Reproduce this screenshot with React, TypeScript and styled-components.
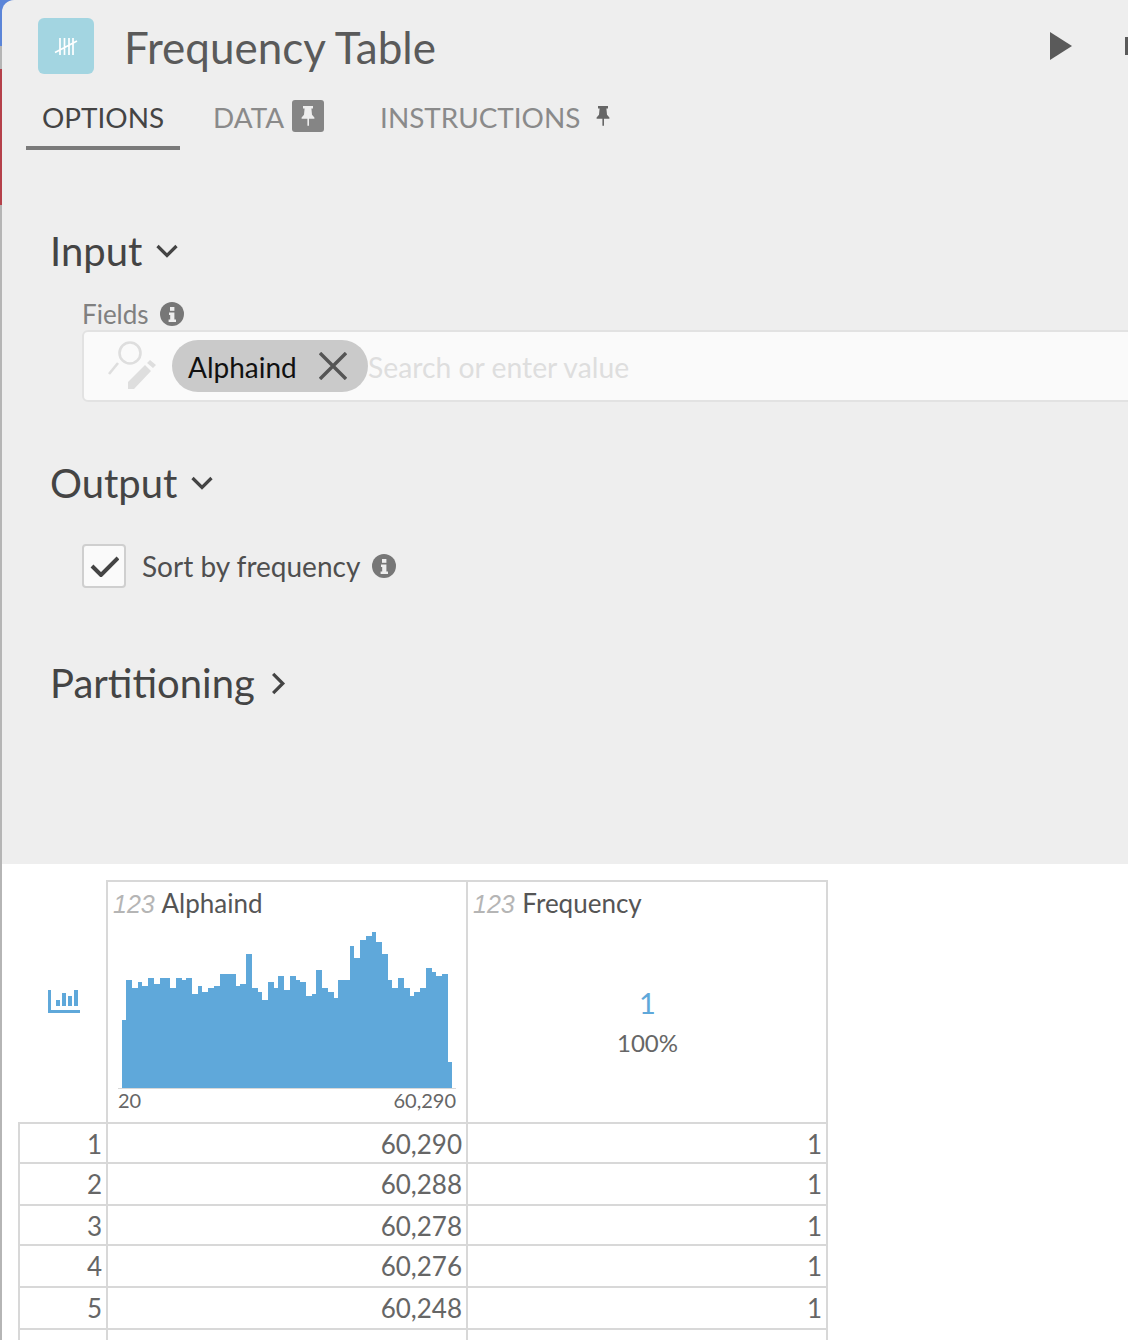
import React from 'react'
import styled, { createGlobalStyle } from 'styled-components'

const HISTOGRAM: [number, number][] = [
  [78, 300], [96, 180], [114, 204], [126, 186], [144, 198], [162, 174], [180, 192], [210, 174],
  [228, 204], [246, 174], [258, 180], [276, 174], [294, 222], [306, 198], [324, 216], [342, 204],
  [360, 198], [408, 162], [420, 198], [438, 192], [456, 102], [474, 204], [486, 216], [504, 240],
  [522, 186], [534, 204], [552, 168], [570, 210], [588, 168], [600, 180], [618, 186], [636, 228],
  [648, 222], [666, 150], [684, 204], [702, 216], [714, 234], [750, 180], [762, 78], [780, 114],
  [798, 60], [816, 48], [828, 36], [846, 66], [864, 102], [876, 180], [894, 204], [912, 174],
  [930, 204], [942, 228], [960, 216], [978, 204], [996, 144], [1008, 156], [1026, 168], [1044, 162],
  [1056, 426],
]

function histogramPath() {
  let d = 'M66 504'
  let x = 66
  HISTOGRAM.forEach(([end, top]) => {
    d += `L${x} ${top}L${end} ${top}`
    x = end
  })
  return `${d}L${x} 504Z`
}

const rows = [
  [1, '60,290', 1],
  [2, '60,288', 1],
  [3, '60,278', 1],
  [4, '60,276', 1],
  [5, '60,248', 1],
]

function InfoIcon() {
  return (
    <InfoSvg viewBox="0 0 24 24">
      <circle cx="12" cy="12" r="12" fill="#777" />
      <rect x="10" y="5" width="4.4" height="3.8" fill="#eee" />
      <path d="M9 10.5h5.4v7H16V20H8.6v-2.5h1.6v-4.5H9z" fill="#eee" />
    </InfoSvg>
  )
}

function PinIcon({ color }: { color: string }) {
  return (
    <svg width="14" height="20" viewBox="0 0 14 20">
      <path d="M2 0h10v2.4h-1.6l.6 6.4 2.4 2.6v1.4H8v7H6.4v-7H.6v-1.4L3 8.8l.6-6.4H2z" fill={color} />
    </svg>
  )
}

function App() {
  return (
    <>
      <GlobalStyle />
      <Page>
        <Panel>
          <TitleBar>
            <AppIcon>
              <svg width="24" height="19" viewBox="0 0 24 19">
                <path d="M6 1v17M10.5 1v17M15 1v17M19 1v17M1 15.5L23 4" stroke="#fff" strokeWidth="1.7" fill="none" />
              </svg>
            </AppIcon>
            <Title>Frequency Table</Title>
            <RunButton viewBox="0 0 22 28">
              <path d="M0 0L22 14L0 28Z" fill="#5a5a5a" />
            </RunButton>
            <CutOff />
          </TitleBar>
          <Tabs>
            <Tab $active>OPTIONS</Tab>
            <Tab>
              DATA
              <PinBox>
                <PinIcon color="#eee" />
              </PinBox>
            </Tab>
            <Tab>
              INSTRUCTIONS
              <LoosePin>
                <PinIcon color="#666" />
              </LoosePin>
            </Tab>
          </Tabs>
          <Section>
            <SectionTitle>
              Input
              <Chevron viewBox="0 0 22 14">
                <path d="M1.5 2l9.5 9.5L20.500 2" />
              </Chevron>
            </SectionTitle>
            <FieldLabel>
              Fields <InfoIcon />
            </FieldLabel>
            <SearchBox>
              <SearchIcon viewBox="0 0 50 50">
                <circle cx="22" cy="12" r="10.5" fill="none" stroke="#dedede" strokeWidth="2.6" />
                <path d="M10 22L1 33" stroke="#dedede" strokeWidth="2.6" fill="none" />
                <path d="M20 48v-7L37 24l6 6-17 18zM39 22l3-3 6 5-3 3z" fill="#dedede" />
              </SearchIcon>
              <Chip>
                Alphaind
                <svg width="28" height="28" viewBox="0 0 28 28">
                  <path d="M1 1l26 26M27 1L1 27" stroke="#555" strokeWidth="3.4" />
                </svg>
              </Chip>
              <Placeholder>Search or enter value</Placeholder>
            </SearchBox>
          </Section>
          <OutputSection>
            <SectionTitle>
              Output
              <Chevron viewBox="0 0 22 14">
                <path d="M1.5 2l9.5 9.5L20.500 2" />
              </Chevron>
            </SectionTitle>
            <CheckRow>
              <CheckBox>
                <svg width="30" height="22" viewBox="0 0 30 22">
                  <path d="M3 11l9 9L29 3" stroke="#444" strokeWidth="4" fill="none" />
                </svg>
              </CheckBox>
              Sort by frequency
              <InfoIcon />
            </CheckRow>
          </OutputSection>
          <PartitionTitle>
            Partitioning
            <ChevronRight viewBox="0 0 14 22">
              <path d="M2 2l9 9-9 9" />
            </ChevronRight>
          </PartitionTitle>
        </Panel>
        <TableArea>
          <Grid>
            <ChartCorner>
              <svg width="32" height="23" viewBox="0 0 32 23">
                <path d="M1.5 0v21.5H32" stroke="#5fa8da" strokeWidth="3" fill="none" />
                <path d="M8 10h4v6H8zM14 3h4v13h-4zM20 6h4v10h-4zM26 0h4v16h-4z" fill="#5fa8da" />
              </svg>
            </ChartCorner>
            <HeadCell>
              <HeadName>
                <TypeTag>123</TypeTag> Alphaind
              </HeadName>
              <HistogramSvg viewBox="54 0 1014 510">
                <path d={histogramPath()} fill="#5fa8da" />
                <path d="M54 505.5H1068" stroke="#d8d8d8" strokeWidth="3" />
              </HistogramSvg>
              <AxisRow>
                <span>20</span>
                <span>60,290</span>
              </AxisRow>
            </HeadCell>
            <HeadCell>
              <HeadName>
                <TypeTag>123</TypeTag> Frequency
              </HeadName>
              <Summary>
                <SummaryValue>1</SummaryValue>
                <SummaryPct>100%</SummaryPct>
              </Summary>
            </HeadCell>
            {rows.map(([index, value, freq]) => (
              <React.Fragment key={index}>
                <Cell>{index}</Cell>
                <Cell>{value}</Cell>
                <Cell>{freq}</Cell>
              </React.Fragment>
            ))}
            <Cell />
            <Cell />
            <Cell />
          </Grid>
        </TableArea>
      </Page>
    </>
  )
}

export default App

const GlobalStyle = createGlobalStyle`
  html, body {
    margin: 0;
    padding: 0;
    background: #fff;
  }
  body {
    font-family: Lato, "Open Sans", sans-serif;
    overflow: hidden;
  }
`

const Page = styled.div`
  width: 1128px;
  height: 1340px;
  overflow: hidden;
  background: linear-gradient(
    #5b85d8 0 46px,
    #b5b5b5 46px 69px,
    #b5414a 69px 205px,
    #b5b5b5 205px
  );
`

const Panel = styled.div`
  margin-left: 2px;
  height: 864px;
  box-sizing: border-box;
  background: #eeeeee;
  border-top-left-radius: 12px;
  padding-top: 18px;
  overflow: hidden;
`

const TitleBar = styled.div`
  display: flex;
  align-items: center;
  height: 56px;
  padding-left: 36px;
`

const AppIcon = styled.div`
  width: 56px;
  height: 56px;
  border-radius: 6px;
  background: #a3d5e1;
  display: flex;
  align-items: center;
  justify-content: center;
`

const Title = styled.h1`
  margin: 2px 0 0 30px;
  font-size: 44px;
  font-weight: 400;
  color: #5a5a5a;
  flex: 1;
`

const RunButton = styled.svg`
  width: 22px;
  height: 28px;
  margin-right: 53px;
`

const CutOff = styled.div`
  width: 3px;
  height: 18px;
  background: #5a5a5a;
`

const Tabs = styled.div`
  display: flex;
  margin: 18px 0 0 24px;
  height: 58px;
`

const Tab = styled.div<{ $active?: boolean }>`
  display: flex;
  align-items: flex-start;
  gap: 8px;
  padding: 8px 16px 0;
  margin-right: ${({ $active }) => ($active ? '17px' : '24px')};
  font-size: 27.9px;
  line-height: 35px;
  color: ${({ $active }) => ($active ? '#444' : '#8a8a8a')};
  border-bottom: ${({ $active }) => ($active ? '4px solid #7a7a7a' : '4px solid transparent')};
  box-sizing: border-box;
`

const PinBox = styled.span`
  width: 32px;
  height: 32px;
  border-radius: 3px;
  background: #858585;
  display: flex;
  align-items: center;
  justify-content: center;
`

const LoosePin = styled.span`
  display: flex;
  margin: 6px 0 0 8px;
`

const Section = styled.section`
  margin: 78px 0 0 48px;
`

const OutputSection = styled.section`
  margin: 58px 0 0 48px;
`

const SectionTitle = styled.h2`
  display: flex;
  align-items: center;
  gap: 14px;
  margin: 0;
  height: 46px;
  font-size: 40px;
  font-weight: 400;
  color: #444;
`

const PartitionTitle = styled(SectionTitle)`
  margin: 72px 0 0 48px;
  gap: 16px;
`

const Chevron = styled.svg`
  width: 22px;
  height: 14px;
  fill: none;
  stroke: #444;
  stroke-width: 3.2;
`

const ChevronRight = styled.svg`
  width: 15px;
  height: 25px;
  fill: none;
  stroke: #444;
  stroke-width: 3;
`

const FieldLabel = styled.div`
  display: flex;
  align-items: center;
  gap: 11px;
  margin: 25px 0 0 32px;
  height: 30px;
  font-size: 26px;
  color: #808080;
`

const InfoSvg = styled.svg`
  width: 24px;
  height: 24px;
  flex: none;
`

const SearchBox = styled.div`
  display: flex;
  align-items: center;
  margin: 1px -20px 0 32px;
  height: 72px;
  box-sizing: border-box;
  background: #fafafa;
  border: 2px solid #e2e2e2;
  border-radius: 6px;
  padding-left: 24px;
`

const SearchIcon = styled.svg`
  width: 50px;
  height: 50px;
  flex: none;
`

const Chip = styled.div`
  display: flex;
  align-items: center;
  justify-content: space-between;
  width: 196px;
  height: 52px;
  box-sizing: border-box;
  padding: 2px 21px 0 16px;
  margin-left: 14px;
  border-radius: 26px;
  background: #cacaca;
  color: #111;
  font-size: 28px;
  flex: none;

  svg {
    margin-top: -2px;
  }
`

const Placeholder = styled.span`
  padding-top: 2px;
  font-size: 28.3px;
  color: #dedede;
`

const CheckRow = styled.div`
  display: flex;
  align-items: center;
  margin: 38px 0 0 32px;
  height: 44px;
  font-size: 28px;
  color: #4f4f4f;

  > svg {
    margin-left: 12px;
    margin-top: -1px;
  }
`

const CheckBox = styled.div`
  width: 44px;
  height: 44px;
  box-sizing: border-box;
  background: #fafafa;
  border: 2px solid #cfcfcf;
  border-radius: 4px;
  display: flex;
  align-items: center;
  justify-content: center;
  margin-right: 16px;
`

const TableArea = styled.div`
  height: 476px;
  background: #fff;
  border-left: 2px solid #b5b5b5;
  padding: 16px 0 0 16px;
  overflow: hidden;
`

const Grid = styled.div`
  display: grid;
  grid-template-columns: 88px 360px 362px;
  grid-template-rows: 242px 40px 42px 40px 42px 42px 40px;
`

const ChartCorner = styled.div`
  display: flex;
  justify-content: flex-end;
  padding: 110px 26px 0 0;
`

const HeadCell = styled.div`
  position: relative;
  border: 2px solid #d8d8d8;
  border-right-width: 0;
  border-bottom-width: 0;
  box-sizing: border-box;
  padding: 4px 4px 0 5px;

  &:nth-child(3) {
    border-right-width: 2px;
  }
`

const HeadName = styled.div`
  font-size: 26px;
  line-height: 35px;
  color: #555;
`

const TypeTag = styled.span`
  font-family: 'Liberation Sans', sans-serif;
  font-style: italic;
  font-size: 25px;
  color: #b5b5b5;
  margin-right: 1px;
`

const HistogramSvg = styled.svg`
  display: block;
  width: 338px;
  height: 170px;
  margin: -2px 0 0 5px;
`

const AxisRow = styled.div`
  display: flex;
  justify-content: space-between;
  margin: -2px 4px 0 5px;
  width: 338px;
  font-size: 20px;
  line-height: 24px;
  color: #666;
`

const Summary = styled.div`
  text-align: center;
  margin-top: 63px;
`

const SummaryValue = styled.div`
  font-size: 29px;
  line-height: 36px;
  color: #5fa8da;
`

const SummaryPct = styled.div`
  font-size: 24px;
  line-height: 44px;
  color: #666;
`

const Cell = styled.div`
  border: 2px solid #d8d8d8;
  border-right-width: 0;
  border-bottom-width: 0;
  box-sizing: border-box;
  padding-right: 4px;
  text-align: right;
  font-size: 26px;
  line-height: 41px;
  color: #666;

  &:nth-child(3n + 3) {
    border-right-width: 2px;
  }
`
